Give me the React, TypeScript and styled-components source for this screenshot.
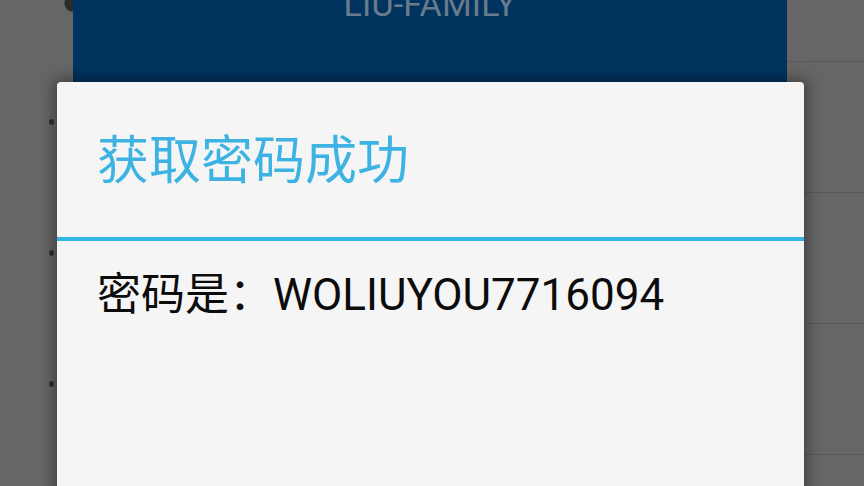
import React from 'react';
import styled, { createGlobalStyle } from 'styled-components';

const GlobalStyle = createGlobalStyle`
  html, body {
    margin: 0;
    padding: 0;
    width: 864px;
    height: 486px;
    overflow: hidden;
    background: #666666;
  }
  * { box-sizing: border-box; }
`;

const Screen = styled.div`
  position: relative;
  width: 864px;
  height: 486px;
  overflow: hidden;
  background: #666666;
  font-family: Roboto, "Noto Sans CJK SC", sans-serif;
`;

const List = styled.div`
  display: flex;
  flex-direction: column;
`;

const Row = styled.div<{ first?: boolean }>`
  height: ${props => props.first ? '62px' : '131px'};
  display: flex;
`;

const RowLead = styled.div`
  flex: 1;
  display: flex;
  align-items: center;
  padding: 0 0 12px 49px;
`;

const RowTail = styled.div`
  width: 77px;
  border-bottom: 1px solid #585858;
`;

const RowDot = styled.span`
  width: 5px;
  height: 6px;
  border-radius: 50%;
  background: #2e2e2e;
`;

const Banner = styled.div`
  position: absolute;
  left: 73px;
  top: 0;
  width: 714px;
  height: 120px;
  background: #00345f;
  display: flex;
  justify-content: center;
`;

const BannerTitle = styled.div`
  font-family: Roboto, "Liberation Sans", sans-serif;
  font-size: 34px;
  line-height: 34px;
  color: #6a7b8d;
  margin-top: -13px;
  letter-spacing: 0.2px;
`;

const CornerMark = styled.div`
  position: absolute;
  left: 65px;
  top: -2px;
  width: 10px;
  height: 14px;
  border-radius: 50% 40% 50% 50%;
  background: #2c2c2c;
  transform: rotate(-30deg);
`;

const Dialog = styled.div`
  position: absolute;
  left: 57px;
  top: 82px;
  width: 747px;
  height: 440px;
  background: #f5f5f5;
  border-radius: 4px;
  box-shadow: 0 0 14px 4px rgba(0, 0, 0, 0.35);
  display: flex;
  flex-direction: column;
`;

const DialogHeader = styled.div`
  height: 159px;
  display: flex;
  align-items: center;
  padding: 4px 40px 0;
  border-bottom: 4px solid #33b5e5;
`;

const DialogTitle = styled.h2`
  margin: 0;
  font-family: Roboto, "Noto Sans CJK SC", sans-serif;
  font-weight: 400;
  font-size: 52px;
  line-height: 60px;
  color: #3db3e3;
`;

const DialogBody = styled.div`
  padding: 26px 40px 0;
`;

const Message = styled.p`
  margin: 0;
  font-family: Roboto, "Noto Sans CJK SC", sans-serif;
  font-size: 44px;
  line-height: 56px;
  color: #0c0c0c;
`;

const App: React.FC = () => {
  return (
    <>
      <GlobalStyle />
      <Screen>
        <List>
          <Row first>
            <RowLead />
            <RowTail />
          </Row>
          {[0, 1, 2].map(i => (
            <Row key={i}>
              <RowLead><RowDot /></RowLead>
              <RowTail />
            </Row>
          ))}
        </List>
        <CornerMark />
        <Banner>
          <BannerTitle>LIU-FAMILY</BannerTitle>
        </Banner>
        <Dialog>
          <DialogHeader>
            <DialogTitle>获取密码成功</DialogTitle>
          </DialogHeader>
          <DialogBody>
            <Message>密码是：WOLIUYOU7716094</Message>
          </DialogBody>
        </Dialog>
      </Screen>
    </>
  );
};

export default App;
